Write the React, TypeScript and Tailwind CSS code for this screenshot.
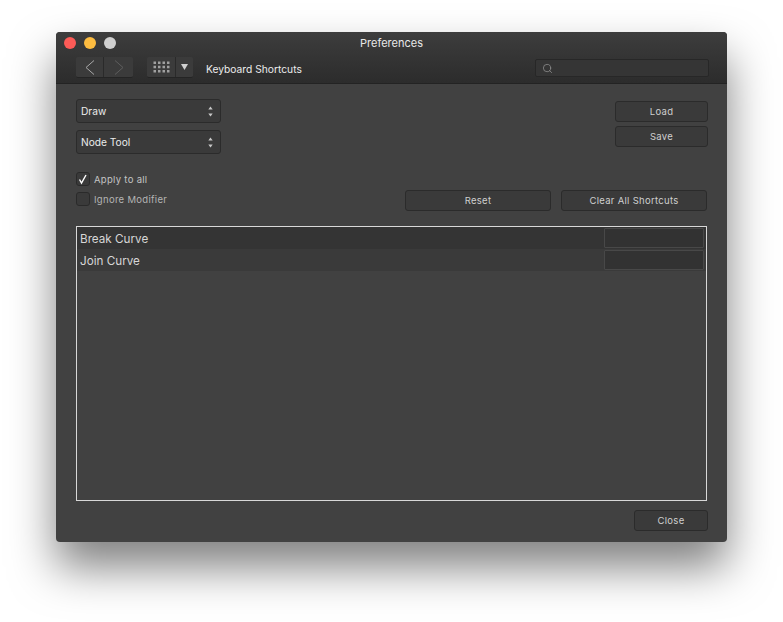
import { Search } from 'lucide-react';

const FONT = "font-['Inter','Liberation_Sans',sans-serif]";

function UpDown() {
  return (
    <svg width="5" height="11" viewBox="0 0 5 11" className="fill-[#c8c8c8]">
      <path d="M2.5 0.5 L4.7 3.5 H0.3 Z" />
      <path d="M2.5 10.5 L4.7 7.5 H0.3 Z" />
    </svg>
  );
}

function Select({ label }: { label: string }) {
  return (
    <div className="flex h-[24px] w-[145px] items-center justify-between rounded-[3px] border border-[#2b2b2b] bg-[#3a3a3a] pl-[4px] pr-[7px] text-[10.2px] text-[#ececec]">
      <span className="pt-[1px]">{label}</span>
      <UpDown />
    </div>
  );
}

function Button({ label, className }: { label: string; className: string }) {
  return (
    <button className={`flex h-[21px] items-center justify-center rounded-[3px] border border-[#2b2b2b] bg-[#3a3a3a] pt-[2px] text-[9.5px] tracking-[0.3px] text-[#cfcfcf] ${className}`}>
      {label}
    </button>
  );
}

function Row({ label, odd }: { label: string; odd: boolean }) {
  return (
    <div className={`flex h-[22px] items-center justify-between pl-[3px] pr-[2px] text-[11.7px] text-[#d6d6d6] ${odd ? 'bg-[#343434]' : 'bg-[#3a3a3a]'}`}>
      <span className="pt-[3px]">{label}</span>
      <div className="h-[20px] w-[100px] rounded-[1px] border border-[#484848] bg-[#323232]" />
    </div>
  );
}

export default function App() {
  return (
    <div className={`h-[622px] w-[783px] overflow-hidden bg-white pl-[56px] pt-[32px] ${FONT}`}>
      <div className="flex h-[510px] w-[671px] flex-col overflow-hidden rounded-[4px] bg-[#414141] shadow-[0_25px_45px_rgba(0,0,0,0.5)]">
        <div className="h-[52px] shrink-0 border-b border-[#232323] bg-gradient-to-b from-[#3d3d3d] to-[#2c2c2c]">
          <div className="relative flex h-[21px] items-center gap-[8px] pl-[8px]">
            <span className="h-[12px] w-[12px] rounded-full bg-[#fc5b57]" />
            <span className="h-[12px] w-[12px] rounded-full bg-[#fdbc40]" />
            <span className="h-[12px] w-[12px] rounded-full bg-[#cfcfcf]" />
            <span className="absolute inset-x-0 top-[3px] text-center text-[11px] leading-[16px] text-[#e8e8e8]">Preferences</span>
          </div>
          <div className="flex h-[22px] items-center pl-[20px] pr-[18px] pt-[7px]">
            <div className="flex h-[21px] overflow-hidden rounded-[2px] border-b border-[#242424] bg-[#3b3b3b]">
              <div className="flex w-[28px] items-center justify-center border-r border-[#2a2a2a]">
                <svg width="10" height="15" viewBox="0 0 10 15" fill="none" className="stroke-[#a8a8a8]">
                  <path d="M9 0.5 L1 7.5 L9 14.5" />
                </svg>
              </div>
              <div className="flex w-[29px] items-center justify-center">
                <svg width="10" height="15" viewBox="0 0 10 15" fill="none" className="stroke-[#5e5e5e]">
                  <path d="M1 0.5 L9 7.5 L1 14.5" />
                </svg>
              </div>
            </div>
            <div className="ml-[14px] flex h-[21px] overflow-hidden rounded-[2px] border-b border-[#242424] bg-[#3b3b3b]">
              <div className="flex w-[29px] items-center justify-center border-r border-[#2a2a2a]">
                <svg width="17" height="12" viewBox="0 0 17 12" className="fill-[#a0a0a0]">
                  {[0.5, 4.75, 9].map((y) =>
                    [0.5, 5, 9.5, 14].map((x) => <rect key={`${x}-${y}`} x={x} y={y} width="2.5" height="2.5" />)
                  )}
                </svg>
              </div>
              <div className="flex w-[17px] items-center justify-center">
                <svg width="7" height="6" viewBox="0 0 7 6" className="fill-[#d0d0d0]">
                  <path d="M0 0 H7 L3.5 6 Z" />
                </svg>
              </div>
            </div>
            <span className="ml-[13px] pt-[5px] text-[10.25px] text-[#ececec]">Keyboard Shortcuts</span>
            <div className="ml-auto mt-[1px] flex h-[18px] w-[174px] items-center rounded-[2px] border border-[#272727] bg-[#353535] pl-[6px]">
              <Search className="h-[11px] w-[11px] text-[#9a9a9a]" strokeWidth={1.5} />
            </div>
          </div>
        </div>

        <div className="flex min-h-0 flex-1 flex-col px-[20px] pt-[15px]">
          <div className="flex h-[127px] shrink-0 justify-between pb-[15px]">
            <div className="flex flex-col">
              <Select label="Draw" />
              <div className="mt-[7px]">
                <Select label="Node Tool" />
              </div>
              <div className="mt-[18px] flex items-center gap-[4px] text-[9.5px] leading-[12px] tracking-[0.3px] text-[#c4c4c4]">
                <span className="relative h-[14px] w-[14px] rounded-[3px] border border-[#2a2a2a] bg-[#3a3a3a]">
                  <svg width="14" height="14" viewBox="0 0 14 14" fill="none" className="absolute -left-px -top-px stroke-white">
                    <path d="M3.5 7.5 L5.5 11 L10 3" strokeWidth="1.4" />
                  </svg>
                </span>
                <span className="pt-[2px]">Apply to all</span>
              </div>
              <div className="mt-[6px] flex items-center gap-[4px] text-[9.5px] leading-[12px] tracking-[0.3px] text-[#b4b4b4]">
                <span className="h-[14px] w-[14px] rounded-[3px] border border-[#2a2a2a] bg-[#3a3a3a]" />
                <span className="pt-[2px]">Ignore Modifier</span>
              </div>
            </div>
            <div className="flex flex-col items-end justify-between pt-[2px]">
              <div className="-mr-px flex flex-col gap-[4px]">
                <Button label="Load" className="w-[93px]" />
                <Button label="Save" className="w-[93px]" />
              </div>
              <div className="flex gap-[10px]">
                <Button label="Reset" className="w-[146px]" />
                <Button label="Clear All Shortcuts" className="w-[146px]" />
              </div>
            </div>
          </div>

          <div className="h-[275px] shrink-0 border border-[#d8d8d8] bg-[#414141]">
            <Row label="Break Curve" odd />
            <Row label="Join Curve" odd={false} />
          </div>

          <div className="-mr-px mt-[9px] flex justify-end">
            <Button label="Close" className="w-[74px]" />
          </div>
        </div>
      </div>
    </div>
  );
}
